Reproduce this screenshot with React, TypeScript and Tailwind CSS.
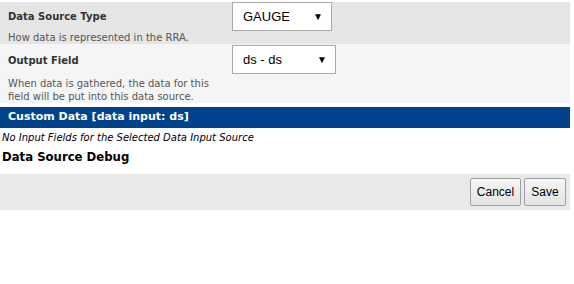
function FakeSelect({ value, width }: { value: string; width: string }) {
  return (
    <div
      className={`flex h-[29px] ${width} items-center justify-between border border-[#a9a9a9] bg-white pl-[10px] pr-[8px] font-['Liberation_Sans',Arial,sans-serif] text-[13px] text-black`}
    >
      <span>{value}</span>
      <span className="text-[10px] leading-none">▼</span>
    </div>
  );
}

export default function App() {
  return (
    <div className="w-[570px] bg-white font-['DejaVu_Sans',Verdana,sans-serif] text-[#333]">
      {/* Data Source Type */}
      <div className="mt-[2px] flex h-[42px] bg-[#e5e5e5]">
        <div className="w-[232px] pl-[8px]">
          <div className="pt-[8px] text-[10px] font-bold leading-[14px]">Data Source Type</div>
          <div className="pt-[8px] text-[10px] leading-[12px] text-[#555]">How data is represented in the RRA.</div>
        </div>
        <div>
          <FakeSelect value="GAUGE" width="w-[100px]" />
        </div>
      </div>

      {/* Output Field */}
      <div className="flex h-[59px] bg-[#f5f5f5]">
        <div className="w-[232px] pl-[8px]">
          <div className="pt-[10px] text-[10px] font-bold leading-[14px]">Output Field</div>
          <div className="pt-[9px] text-[10px] leading-[13px] text-[#555]">
            When data is gathered, the data for this
            <br />
            field will be put into this data source.
          </div>
        </div>
        <div className="pt-[1px]">
          <FakeSelect value="ds - ds" width="w-[104px]" />
        </div>
      </div>

      {/* Custom Data header */}
      <div className="mt-[4px] flex h-[21px] items-center bg-[#00438c] pl-[8px] text-[11px] font-bold text-white">
        Custom Data [data input: ds]
      </div>

      <div className="pl-[2px] pt-[3px] text-[10px] italic leading-[13px] text-black">
        No Input Fields for the Selected Data Input Source
      </div>

      <div className="pl-[2px] pt-[5px] text-[11.7px] font-bold leading-[16px] text-black">Data Source Debug</div>

      {/* Buttons bar */}
      <div className="mt-[9px] flex h-[36px] items-center justify-end gap-[3px] bg-[#e9e9e9] pr-[4px]">
        <button className="h-[28px] w-[51px] rounded-[2px] border border-[#a0a0a0] bg-gradient-to-b from-[#f6f6f6] to-[#e3e3e3] font-['Liberation_Sans',Arial,sans-serif] text-[12px] text-black">
          Cancel
        </button>
        <button className="h-[28px] w-[42px] rounded-[2px] border border-[#a0a0a0] bg-gradient-to-b from-[#f6f6f6] to-[#e3e3e3] font-['Liberation_Sans',Arial,sans-serif] text-[12px] text-black">
          Save
        </button>
      </div>
    </div>
  );
}
